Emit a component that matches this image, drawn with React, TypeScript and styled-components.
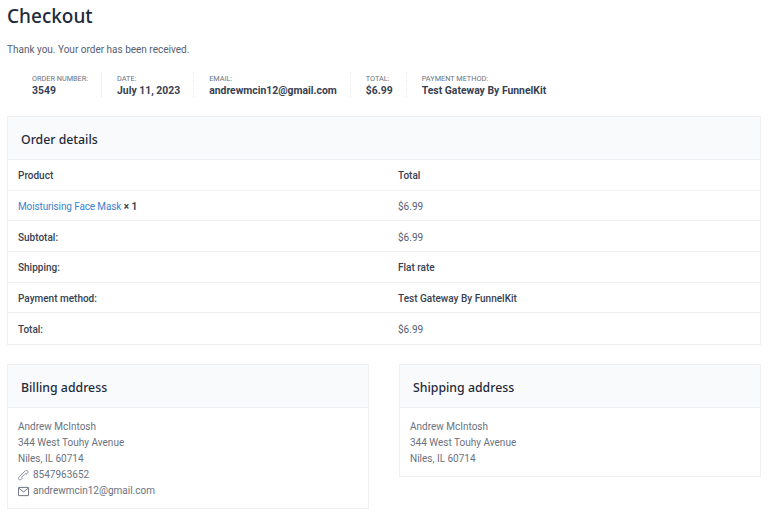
import React from "react";
import styled, { createGlobalStyle } from "styled-components";

const Global = createGlobalStyle`
  html, body { margin: 0; padding: 0; background: #fff; }
  body { font-family: Roboto, "Noto Sans", "Liberation Sans", sans-serif; color: #4b5563; }
`;

const Page = styled.main`
  width: 754px;
  height: 516px;
  padding-left: 7px;
  overflow: hidden;
`;

const Title = styled.h1`
  margin: 0;
  padding-top: 2px;
  font-family: "Noto Sans", sans-serif;
  font-size: 19px;
  line-height: 28px;
  font-weight: 500;
  color: #1f2a3c;
`;

const Thanks = styled.p`
  margin: 12px 0 0;
  font-size: 10px;
  line-height: 16px;
  color: #566072;
`;

const Overview = styled.ul`
  list-style: none;
  display: flex;
  margin: 14px 0 0;
  padding: 0 0 0 25px;
  height: 25px;
`;

const OverviewItem = styled.li`
  padding-right: 13px;
  margin-right: 15px;
  border-right: 1px dotted #e6e8ec;
  &:last-child { border-right: 0; }
`;

const OverviewLabel = styled.div`
  font-size: 7.3px;
  line-height: 11px;
  padding-top: 1px;
  color: #6b7280;
  text-transform: uppercase;
`;

const OverviewValue = styled.div`
  font-size: 10.4px;
  line-height: 13px;
  font-weight: 700;
  color: #374151;
`;

const Card = styled.section`
  border: 1px solid #eef0f3;
  box-sizing: border-box;
`;

const OrderCard = styled(Card)`
  margin-top: 19px;
  height: 229px;
`;

const CardHeader = styled.h2`
  margin: 0;
  height: 43px;
  padding: 3px 0 0 13px;
  display: flex;
  align-items: center;
  box-sizing: border-box;
  background: #f9fafb;
  border-bottom: 1px solid #eef0f3;
  font-family: "Noto Sans", sans-serif;
  font-size: 12.3px;
  font-weight: 500;
  color: #1f2a3c;
`;

const Row = styled.div`
  display: grid;
  grid-template-columns: 380px 1fr;
  height: 30.67px;
  align-items: center;
  padding: 2px 0 0 10px;
  border-bottom: 1px solid #eef0f3;
  box-sizing: border-box;
  font-size: 10px;
  color: #566072;
  &:last-child { border-bottom: 0; }
`;

const Strong = styled.span`
  font-weight: 500;
  color: #374151;
`;

const Quantity = styled.span`
  font-weight: 700;
  color: #374151;
`;

const ProductLink = styled.a`
  letter-spacing: -0.13px;
  color: #3b82d0;
  text-decoration: none;
`;

const Addresses = styled.div`
  display: grid;
  grid-template-columns: 362px 362px;
  column-gap: 30px;
  align-items: start;
  margin-top: 19px;
`;

const AddressBody = styled.address`
  padding: 11px 10px 9px;
  font-style: normal;
  font-size: 10px;
  line-height: 16px;
  color: #6b7280;
`;

const ContactLine = styled.div`
  display: flex;
  align-items: center;
  gap: 4px;
`;

const Icon = styled.svg<{ $tone: string }>`
  width: 11px;
  height: 11px;
  flex: none;
  fill: none;
  stroke: ${(p) => p.$tone};
  stroke-width: 1;
`;

const details: [string, string][] = [
  ["Subtotal:", "$6.99"],
  ["Shipping:", "Flat rate"],
  ["Payment method:", "Test Gateway By FunnelKit"],
  ["Total:", "$6.99"],
];

const overview: [string, string][] = [
  ["Order number:", "3549"],
  ["Date:", "July 11, 2023"],
  ["Email:", "andrewmcin12@gmail.com"],
  ["Total:", "$6.99"],
  ["Payment method:", "Test Gateway By FunnelKit"],
];

export default function App() {
  return (
    <Page>
      <Global />
      <Title>Checkout</Title>
      <Thanks>Thank you. Your order has been received.</Thanks>
      <Overview>
        {overview.map(([l, v]) => (
          <OverviewItem key={l}>
            <OverviewLabel>{l}</OverviewLabel>
            <OverviewValue>{v}</OverviewValue>
          </OverviewItem>
        ))}
      </Overview>
      <OrderCard>
        <CardHeader>Order details</CardHeader>
        <Row>
          <Strong>Product</Strong>
          <Strong>Total</Strong>
        </Row>
        <Row>
          <span>
            <ProductLink href="#">Moisturising Face Mask</ProductLink> <Quantity>× 1</Quantity>
          </span>
          <span>$6.99</span>
        </Row>
        {details.map(([l, v]) => (
          <Row key={l}>
            <Strong>{l}</Strong>
            {l === "Subtotal:" || l === "Total:" ? <span>{v}</span> : <Strong>{v}</Strong>}
          </Row>
        ))}
      </OrderCard>
      <Addresses>
        <Card>
          <CardHeader>Billing address</CardHeader>
          <AddressBody>
            Andrew McIntosh
            <br />
            344 West Touhy Avenue
            <br />
            Niles, IL 60714
            <ContactLine>
              <Icon viewBox="0 0 12 12" $tone="#7f8796">
                <path d="M7.600 1.200c.9-.9 2.200-.9 2.800-.2.7.7.6 1.900-.3 2.800L9 4.500 7.800 3.900 4 7.800l.6 1.200-.9.9c-.9.9-2.100 1-2.800.3-.7-.7-.6-1.900.3-2.800z" />
              </Icon>
              8547963652
            </ContactLine>
            <ContactLine>
              <Icon viewBox="0 0 12 12" $tone="#5f6878">
                <rect x="0.5" y="1.500" width="11" height="9" rx="0.6" />
                <path d="M1 2.500l5 4 5-4" />
              </Icon>
              andrewmcin12@gmail.com
            </ContactLine>
          </AddressBody>
        </Card>
        <Card>
          <CardHeader>Shipping address</CardHeader>
          <AddressBody>
            Andrew McIntosh
            <br />
            344 West Touhy Avenue
            <br />
            Niles, IL 60714
          </AddressBody>
        </Card>
      </Addresses>
    </Page>
  );
}
